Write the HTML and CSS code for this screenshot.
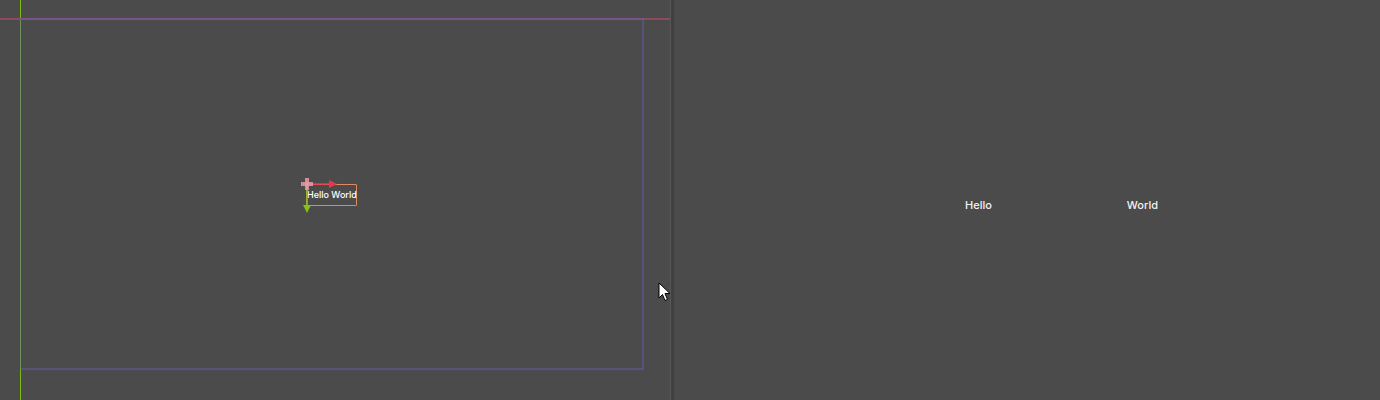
FILE: index.html
```html
<!DOCTYPE html>
<html lang="en">
<head>
<meta charset="UTF-8">
<title>Scene view</title>
<link rel="stylesheet" href="styles.css">
</head>
<body>

<div class="editor">
  <div class="viewport">
    <div class="axis-y"></div>
    <div class="axis-x"></div>
    <div class="frame"></div>

    <div class="gizmo">
      <div class="node-box">Hello World</div>
      <svg class="handles" width="44" height="40" viewBox="0 0 44 40">
        <line x1="6" y1="9" x2="30" y2="9" stroke="#e8384f" stroke-width="1.5"/>
        <polygon points="29,5 37,9 29,13" fill="#e8384f"/>
        <line x1="7" y1="9" x2="7" y2="31" stroke="#84c21a" stroke-width="1.5"/>
        <polygon points="3,30 11,30 7,38" fill="#84c21a"/>
        <rect x="5" y="3" width="4" height="12" fill="#e89aa6" opacity="0.85"/>
        <rect x="1" y="7" width="12" height="4" fill="#e89aa6" opacity="0.85"/>
      </svg>
    </div>

    <svg class="cursor" width="14" height="20" viewBox="0 0 14 20">
      <path d="M1 1 L1 16 L4.5 12.5 L7 18.5 L9.5 17.5 L7 11.5 L12 11.5 Z" fill="#fff" stroke="#000" stroke-width="1"/>
    </svg>
  </div>

  <div class="divider"></div>

  <div class="preview">
    <span class="word">Hello</span>
    <span class="word">World</span>
  </div>
</div>

</body>
</html>
```

FILE: styles.css
```css
body {
  margin: 0;
  background-color: #4b4b4b;
  font-family: Inter, "Noto Sans", sans-serif;
  overflow: hidden;
}
.editor {
  display: flex;
  height: 400px;
}
.viewport {
  position: relative;
  width: 670px;
  flex: none;
  background-color: #4b4b4b;
}
.axis-y {
  position: absolute;
  left: 20px;
  top: 0;
  width: 1px;
  height: 400px;
  background-color: #7cbc0c;
}
.axis-x {
  position: absolute;
  left: 0;
  top: 18px;
  width: 670px;
  height: 2px;
  background-color: #8e4a5c;
}
.frame {
  position: absolute;
  left: 20px;
  top: 18px;
  width: 621px;
  height: 348px;
  border: 2px solid rgba(100, 95, 190, 0.45);
  border-left-width: 1px;
}
.gizmo {
  position: absolute;
  left: 300px;
  top: 175px;
  width: 60px;
  height: 40px;
}
.node-box {
  position: absolute;
  left: 6px;
  top: 9px;
  width: 49px;
  height: 20px;
  border: 1px solid #e0895e;
  border-radius: 1px;
  color: #fff;
  font-size: 9px;
  font-weight: 500;
  line-height: 20px;
  text-align: center;
  white-space: nowrap;
}
.handles {
  position: absolute;
  left: 0;
  top: 0;
}
.cursor {
  position: absolute;
  left: 658px;
  top: 282px;
}
.divider {
  width: 3px;
  flex: none;
  background-color: #404040;
  border-left: 1px solid #575757;
}
.preview {
  flex: 1;
  display: flex;
  align-items: center;
  gap: 135px;
  padding-left: 291px;
  padding-top: 10px;
  background-color: #4b4b4b;
}
.word {
  color: #f2f2f2;
  font-size: 11px;
  font-weight: 500;
}
```
